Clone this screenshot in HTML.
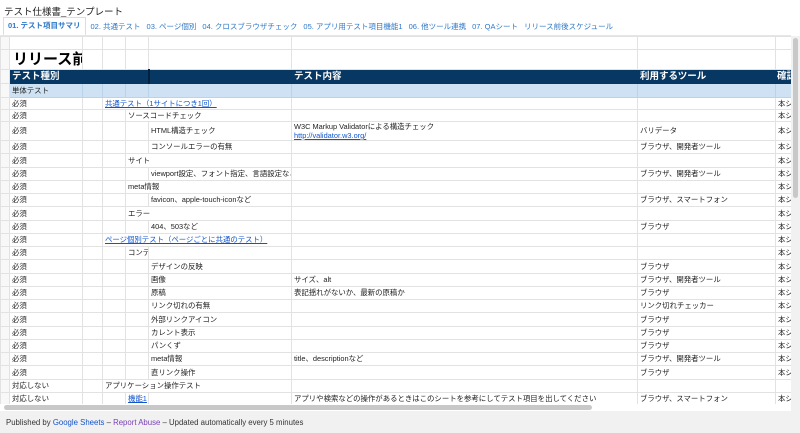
<!DOCTYPE html>
<html><head><meta charset="utf-8"><style>
*{margin:0;padding:0;box-sizing:border-box}
body{width:800px;height:433px;overflow:hidden;background:#f1f1f1;font-family:"Liberation Sans","Noto Sans CJK JP",sans-serif;position:relative}
#top{position:absolute;left:0;top:0;width:800px;height:36px;background:#fff}
#title{position:absolute;left:4px;top:4px;font-size:9.5px;color:#222}
#tabs{position:absolute;left:3px;top:18px;height:17px;font-size:7.5px;color:#2e78c8;display:flex;align-items:center;white-space:nowrap}
#tabs span{padding:0 3px;line-height:16px}
#tabs span.a{border:1px solid #ddd;border-bottom:2px solid #fff;background:#fff;font-weight:bold;padding:0 4px;margin-right:2px}
#grid{position:absolute;left:0;top:35px;width:791px;height:370px;overflow:hidden;background:#fff;border-top:1px solid #e6e6e6}
table{border-collapse:collapse;table-layout:fixed;width:791px;font-size:7.4px;color:#222}
td{border:1px solid #e2e2e2;white-space:nowrap;overflow:hidden;padding:0 2px;vertical-align:middle;line-height:1}
td.rh{background:#f8f8f8}
tr.h td{background:#073763;color:#fff;font-weight:bold;font-size:9.5px;border-color:#073763}
tr.h td.sep{border-left:2px solid #02203f}
tr.lb td{background:#cfe2f3;border-color:#b9d3ea}
a{color:#1155cc;text-decoration:underline}
#vs{position:absolute;left:793px;top:38px;width:5px;height:160px;background:#c8c8c8;border-radius:3px}
#hs{position:absolute;left:4px;top:405px;width:588px;height:5px;background:#c8c8c8;border-radius:3px}
#wb{position:absolute;left:0;top:404px;width:791px;height:7px;background:#fff}
#foot{position:absolute;left:6px;top:418px;font-size:7.8px;color:#333}
#foot .g{color:#1155cc}#foot .r{color:#7b3fb8}
</style></head><body>
<div id="top">
<div id="title">テスト仕様書_テンプレート</div>
<div id="tabs"><span class="a">01. テスト項目サマリ</span><span>02. 共通テスト</span><span>03. ページ個別</span><span>04. クロスブラウザチェック</span><span>05. アプリ用テスト項目機能1</span><span>06. 他ツール連携</span><span>07. QAシート</span><span>リリース前後スケジュール</span></div>
</div>
<div id="grid"><table>
<colgroup><col style="width:9px"><col style="width:73px"><col style="width:20px"><col style="width:23px"><col style="width:23px"><col style="width:143px"><col style="width:346px"><col style="width:138px"><col style="width:16px"></colgroup>
<tr style="height:13px"><td class="rh"></td><td></td><td></td><td></td><td></td><td></td><td></td><td></td><td></td></tr>
<tr style="height:20px"><td class="rh"></td><td style="font-size:15px;font-weight:bold;color:#000;padding-left:3px">リリース前後</td><td></td><td></td><td></td><td></td><td></td><td></td><td></td></tr>
<tr class="h" style="height:14px"><td class="rh" style="background:#f8f8f8;border-color:#e2e2e2"></td><td colspan="4">テスト種別</td><td class="sep"></td><td>テスト内容</td><td>利用するツール</td><td style="padding-left:1px">確認</td></tr>
<tr class="lb" style="height:14px"><td class="rh" style="background:#f8f8f8;border-color:#e2e2e2"></td><td>単体テスト</td><td></td><td></td><td></td><td></td><td></td><td></td><td></td></tr>
<tr style="height:12px"><td class="rh"></td><td>必須</td><td></td><td colspan="3"><a>共通テスト（1サイトにつき1回）</a></td><td></td><td></td><td>本シ</td></tr>
<tr style="height:12px"><td class="rh"></td><td>必須</td><td></td><td></td><td colspan="2">ソースコードチェック</td><td></td><td></td><td>本シ</td></tr>
<tr style="height:19px"><td class="rh"></td><td>必須</td><td></td><td></td><td></td><td>HTML構造チェック</td><td style="line-height:9px">W3C Markup Validatorによる構造チェック<br><a>http://validator.w3.org/</a></td><td>バリデータ</td><td>本シ</td></tr>
<tr style="height:13.25px"><td class="rh"></td><td>必須</td><td></td><td></td><td></td><td>コンソールエラーの有無</td><td></td><td>ブラウザ、開発者ツール</td><td>本シ</td></tr>
<tr style="height:13.25px"><td class="rh"></td><td>必須</td><td></td><td></td><td colspan="2">サイト</td><td></td><td></td><td>本シ</td></tr>
<tr style="height:13.25px"><td class="rh"></td><td>必須</td><td></td><td></td><td></td><td>viewport設定、フォント指定、言語設定など</td><td></td><td>ブラウザ、開発者ツール</td><td>本シ</td></tr>
<tr style="height:13.25px"><td class="rh"></td><td>必須</td><td></td><td></td><td colspan="2">meta情報</td><td></td><td></td><td>本シ</td></tr>
<tr style="height:13.25px"><td class="rh"></td><td>必須</td><td></td><td></td><td></td><td>favicon、apple-touch-iconなど</td><td></td><td>ブラウザ、スマートフォン</td><td>本シ</td></tr>
<tr style="height:13.25px"><td class="rh"></td><td>必須</td><td></td><td></td><td colspan="2">エラー</td><td></td><td></td><td>本シ</td></tr>
<tr style="height:13.25px"><td class="rh"></td><td>必須</td><td></td><td></td><td></td><td>404、503など</td><td></td><td>ブラウザ</td><td>本シ</td></tr>
<tr style="height:13.25px"><td class="rh"></td><td>必須</td><td></td><td colspan="3"><a>ページ個別テスト（ページごとに共通のテスト）</a></td><td></td><td></td><td>本シ</td></tr>
<tr style="height:13.25px"><td class="rh"></td><td>必須</td><td></td><td></td><td>コンテ</td><td></td><td></td><td></td><td>本シ</td></tr>
<tr style="height:13.25px"><td class="rh"></td><td>必須</td><td></td><td></td><td></td><td>デザインの反映</td><td></td><td>ブラウザ</td><td>本シ</td></tr>
<tr style="height:13.25px"><td class="rh"></td><td>必須</td><td></td><td></td><td></td><td>画像</td><td>サイズ、alt</td><td>ブラウザ、開発者ツール</td><td>本シ</td></tr>
<tr style="height:13.25px"><td class="rh"></td><td>必須</td><td></td><td></td><td></td><td>原稿</td><td>表記揺れがないか、最新の原稿か</td><td>ブラウザ</td><td>本シ</td></tr>
<tr style="height:13.25px"><td class="rh"></td><td>必須</td><td></td><td></td><td></td><td>リンク切れの有無</td><td></td><td>リンク切れチェッカー</td><td>本シ</td></tr>
<tr style="height:13.25px"><td class="rh"></td><td>必須</td><td></td><td></td><td></td><td>外部リンクアイコン</td><td></td><td>ブラウザ</td><td>本シ</td></tr>
<tr style="height:13.25px"><td class="rh"></td><td>必須</td><td></td><td></td><td></td><td>カレント表示</td><td></td><td>ブラウザ</td><td>本シ</td></tr>
<tr style="height:13.25px"><td class="rh"></td><td>必須</td><td></td><td></td><td></td><td>パンくず</td><td></td><td>ブラウザ</td><td>本シ</td></tr>
<tr style="height:13.25px"><td class="rh"></td><td>必須</td><td></td><td></td><td></td><td>meta情報</td><td>title、descriptionなど</td><td>ブラウザ、開発者ツール</td><td>本シ</td></tr>
<tr style="height:13.25px"><td class="rh"></td><td>必須</td><td></td><td></td><td></td><td>直リンク操作</td><td></td><td>ブラウザ</td><td>本シ</td></tr>
<tr style="height:13.25px"><td class="rh"></td><td>対応しない</td><td></td><td colspan="3">アプリケーション操作テスト</td><td></td><td></td><td></td></tr>
<tr style="height:13.25px"><td class="rh"></td><td>対応しない</td><td></td><td></td><td><a>機能1</a></td><td></td><td>アプリや検索などの操作があるときはこのシートを参考にしてテスト項目を出してください</td><td>ブラウザ、スマートフォン</td><td>本シ</td></tr>
<tr style="height:13.25px"><td class="rh"></td><td></td><td></td><td></td><td></td><td></td><td></td><td></td><td></td></tr>
</table></div>
<div id="wb"></div>
<div id="vs"></div>
<div id="hs"></div>
<div id="foot">Published by <span class="g">Google Sheets</span> – <span class="r">Report Abuse</span> – Updated automatically every 5 minutes</div>
</body></html>
